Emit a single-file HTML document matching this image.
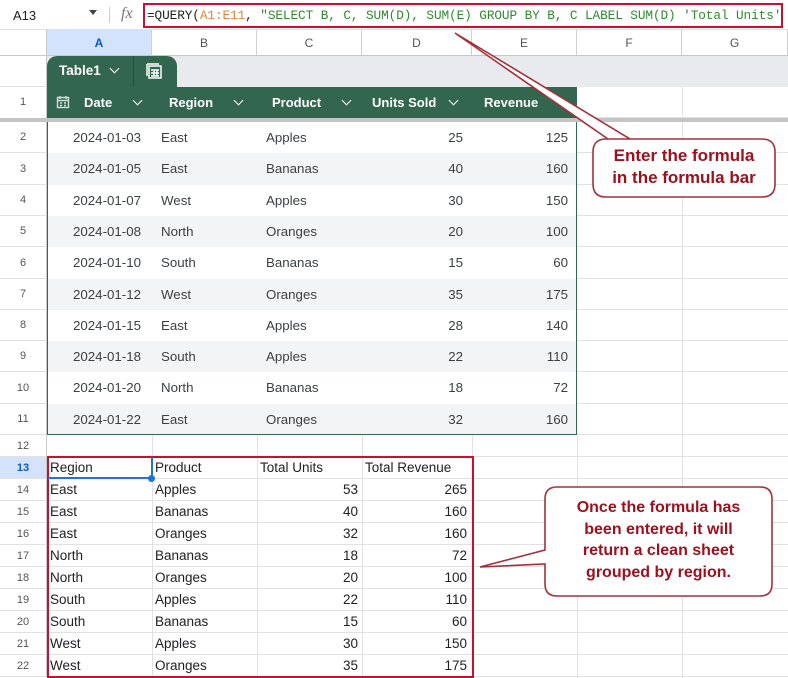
<!DOCTYPE html>
<html><head><meta charset="utf-8"><style>
*{margin:0;padding:0;box-sizing:border-box}
body{width:788px;height:678px;overflow:hidden;background:#fff;font-family:"Liberation Sans",Arial,sans-serif;position:relative;color:#202124}
.a{position:absolute}
.vl{position:absolute;width:1px;background:#e1e1e1}
.hl{position:absolute;height:1px;background:#e1e1e1}
.rn{position:absolute;left:0;width:47px;text-align:center;font-size:11px;color:#555;background:#fff;border-right:1px solid #c7c7c7}
.ch{position:absolute;top:30px;height:26px;line-height:26px;text-align:center;font-size:12px;color:#555;border-right:1px solid #d0d0d0;border-bottom:1px solid #c7c7c7;background:#fff}
.t{position:absolute;font-size:13.3px;color:#3c4043}
.r{font-size:13.5px;color:#202124;position:absolute}
.hd{position:absolute;top:87px;height:31px;line-height:31px;color:#fff;font-weight:bold;font-size:13px}
.chev{display:inline-block;width:7px;height:7px;border-right:1.6px solid #fff;border-bottom:1.6px solid #fff;transform:rotate(45deg);margin-bottom:3px}
</style></head><body>
<div class="a" style="left:0;top:0;width:788px;height:30px;background:#fff;border-bottom:1px solid #e1e1e1"></div>
<div class="a" style="left:13px;top:8px;font-size:13px">A13</div>
<div class="a" style="left:89px;top:10px;width:0;height:0;border-left:4px solid transparent;border-right:4px solid transparent;border-top:5px solid #444"></div>
<div class="a" style="left:109px;top:7px;width:1px;height:16px;background:#ccc"></div>
<div class="a" style="left:121px;top:5px;font-family:'Liberation Serif',serif;font-style:italic;font-size:16px;color:#777">fx</div>
<div class="a" style="left:143px;top:3px;width:640px;height:25px;border:2px solid #c8102e;overflow:hidden;white-space:nowrap;font-family:'Liberation Mono',monospace;font-size:12.75px;line-height:21px;padding-left:2px;letter-spacing:-0.1px"><span style="color:#222">=QUERY(</span><span style="color:#e8833a">A1:E11</span><span style="color:#222">, </span><span style="color:#2e8b2e">"SELECT B, C, SUM(D), SUM(E) GROUP BY B, C LABEL SUM(D) 'Total Units', </span></div>

<div class="a" style="left:0;top:30px;width:47px;height:26px;background:#fff;border-right:1px solid #c7c7c7;border-bottom:1px solid #c7c7c7"></div>
<div class="ch" style="left:47px;width:105px;background:#d3e3fd;color:#0b57d0;font-weight:bold">A</div>
<div class="ch" style="left:152px;width:105px">B</div>
<div class="ch" style="left:257px;width:105px">C</div>
<div class="ch" style="left:362px;width:110px">D</div>
<div class="ch" style="left:472px;width:105px">E</div>
<div class="ch" style="left:577px;width:105px">F</div>
<div class="ch" style="left:682px;width:106px">G</div>

<div class="a" style="left:47px;top:56px;width:741px;height:31px;background:#e8eaed"></div>
<div class="rn" style="top:56px;height:31px;border-bottom:1px solid #e1e1e1"></div>
<div class="a" style="left:47px;top:56px;width:130px;height:31px;background:#33664f;border-radius:10px 10px 0 0"></div>
<div class="a" style="left:133px;top:56px;width:1px;height:31px;background:#245039"></div>
<div class="a" style="left:59px;top:63px;color:#fff;font-weight:bold;font-size:13.5px">Table1 <span class="chev" style="margin-left:6px"></span></div>
<svg class="a" style="left:146px;top:63px" width="18" height="18" viewBox="0 0 18 18" fill="none" stroke="#fff" stroke-width="1.5"><rect x="3" y="3" width="12" height="12"/><path d="M1 1v12M1 1h12M5 7h8M5 10h8M5 13h8M8 7v6M11 7v6"/></svg>

<div class="rn" style="top:87px;height:32px;line-height:31px">1</div>
<div class="a" style="left:47px;top:87px;width:530px;height:31px;background:#33664f"></div>
<div class="a" style="left:577px;top:87px;width:211px;height:31px;border-bottom:1px solid #e1e1e1"></div>
<div class="vl" style="left:682px;top:87px;height:31px"></div>
<svg class="a" style="left:56px;top:95px" width="14" height="14" viewBox="0 0 14 14" fill="none" stroke="#cfe0d6" stroke-width="1.4"><rect x="1.5" y="2.5" width="11" height="10"/><path d="M1.5 5.5h11M4 1v3M10 1v3M4 8h2M8 8h2M4 10.5h2M8 10.5h2"/></svg>
<div class="hd" style="left:84px">Date <span class="chev" style="margin-left:18px"></span></div>
<div class="hd" style="left:169px">Region <span class="chev" style="margin-left:18px"></span></div>
<div class="hd" style="left:272px">Product <span class="chev" style="margin-left:18px"></span></div>
<div class="hd" style="left:372px">Units Sold <span class="chev" style="margin-left:10px"></span></div>
<div class="hd" style="left:484px">Revenue <span class="chev" style="margin-left:14px"></span></div>
<div class="a" style="left:0;top:118px;width:788px;height:4px;background:#c4c4c4"></div>

<div id="data"></div>
<div class="a" style="left:47px;top:122px;width:530px;height:313px;border-left:1.5px solid #33664f;border-right:1.5px solid #33664f;border-bottom:1.5px solid #33664f"></div>
<div class="vl" style="left:682px;top:122px;height:313px"></div>

<div id="low"></div>
<div class="a" style="left:47px;top:456px;width:427px;height:222px;border:2px solid #c8102e"></div>
<div class="a" style="left:48px;top:477px;width:104px;height:2px;background:#1a73e8"></div>
<div class="a" style="left:151px;top:457px;width:2px;height:22px;background:#1a73e8"></div>
<div class="a" style="left:148px;top:475px;width:7px;height:7px;border-radius:50%;background:#1a73e8"></div>

<svg class="a" style="left:0;top:0" width="788" height="678">
<path d="M608 139 H762 Q775 139 775 152 V184 Q775 197 762 197 H606 Q593 197 593 184 V152 Q593 139 606 139 H 630 L455 33 Z" fill="#fff" stroke="#a5303a" stroke-width="1.6"/>
<path d="M560 487 H760 Q772 487 772 499 V584 Q772 596 760 596 H557 Q545 596 545 584 V564 L480 567 L545 550 V499 Q545 487 557 487 Z" fill="#fff" stroke="#a5303a" stroke-width="1.6"/>
</svg>
<div class="a" style="left:593px;top:145px;width:182px;text-align:center;color:#a0101c;font-weight:bold;font-size:17px;line-height:22px">Enter the formula<br>in the formula bar</div>
<div class="a" style="left:545px;top:497px;width:227px;text-align:center;color:#a0101c;font-weight:bold;font-size:16px;line-height:21.5px">Once the formula has<br>been entered, it will<br>return a clean sheet<br>grouped by region.</div>

<script>
var d=[["2024-01-03","East","Apples",25,125],["2024-01-05","East","Bananas",40,160],["2024-01-07","West","Apples",30,150],["2024-01-08","North","Oranges",20,100],["2024-01-10","South","Bananas",15,60],["2024-01-12","West","Oranges",35,175],["2024-01-15","East","Apples",28,140],["2024-01-18","South","Apples",22,110],["2024-01-20","North","Bananas",18,72],["2024-01-22","East","Oranges",32,160]];
var h="";
d.forEach(function(r,i){var y=Math.round(122+i*31.3),y2=Math.round(122+(i+1)*31.3),hh=y2-y;
h+='<div class="rn" style="top:'+y+'px;height:'+hh+'px;line-height:'+hh+'px;border-bottom:1px solid #e1e1e1">'+(i+2)+'</div>';
h+='<div class="a" style="left:47px;top:'+y+'px;width:530px;height:'+hh+'px;background:'+(i%2?'#f3f4f6':'#fff')+'"></div>';
h+='<div class="hl" style="left:577px;top:'+(y2-1)+'px;width:211px"></div>';
var ty=y+8;
h+='<div class="t" style="left:73px;top:'+ty+'px">'+r[0]+'</div>';
h+='<div class="t" style="left:161px;top:'+ty+'px">'+r[1]+'</div>';
h+='<div class="t" style="left:266px;top:'+ty+'px">'+r[2]+'</div>';
h+='<div class="t" style="left:362px;width:101px;text-align:right;top:'+ty+'px">'+r[3]+'</div>';
h+='<div class="t" style="left:472px;width:96px;text-align:right;top:'+ty+'px">'+r[4]+'</div>';
});
document.getElementById("data").innerHTML=h;
var e=[["Region","Product","Total Units","Total Revenue"],["East","Apples",53,265],["East","Bananas",40,160],["East","Oranges",32,160],["North","Bananas",18,72],["North","Oranges",20,100],["South","Apples",22,110],["South","Bananas",15,60],["West","Apples",30,150],["West","Oranges",35,175]];
var g="";
g+='<div class="rn" style="top:435px;height:22px;line-height:22px;border-bottom:1px solid #e1e1e1">12</div>';
g+='<div class="hl" style="left:47px;top:456px;width:741px"></div>';
[152,257,362,472,577,682].forEach(function(x){g+='<div class="vl" style="left:'+x+'px;top:435px;height:243px"></div>'});
e.forEach(function(r,i){var y=457+i*22;
var sel=i==0;
g+='<div class="rn" style="top:'+y+'px;height:22px;line-height:22px;border-bottom:1px solid #e1e1e1;'+(sel?'background:#d3e3fd;color:#0b57d0;font-weight:bold':'')+'">'+(i+13)+'</div>';
g+='<div class="hl" style="left:47px;top:'+(y+21)+'px;width:741px"></div>';
var ty=y+3;
g+='<div class="r" style="left:50px;top:'+ty+'px">'+r[0]+'</div>';
g+='<div class="r" style="left:155px;top:'+ty+'px">'+r[1]+'</div>';
if(i==0){g+='<div class="r" style="left:260px;top:'+ty+'px">'+r[2]+'</div><div class="r" style="left:365px;top:'+ty+'px">'+r[3]+'</div>';}
else{g+='<div class="r" style="left:262px;width:96px;text-align:right;top:'+ty+'px">'+r[2]+'</div><div class="r" style="left:372px;width:95px;text-align:right;top:'+ty+'px">'+r[3]+'</div>';}
});
document.getElementById("low").innerHTML=g;
</script>
</body></html>
